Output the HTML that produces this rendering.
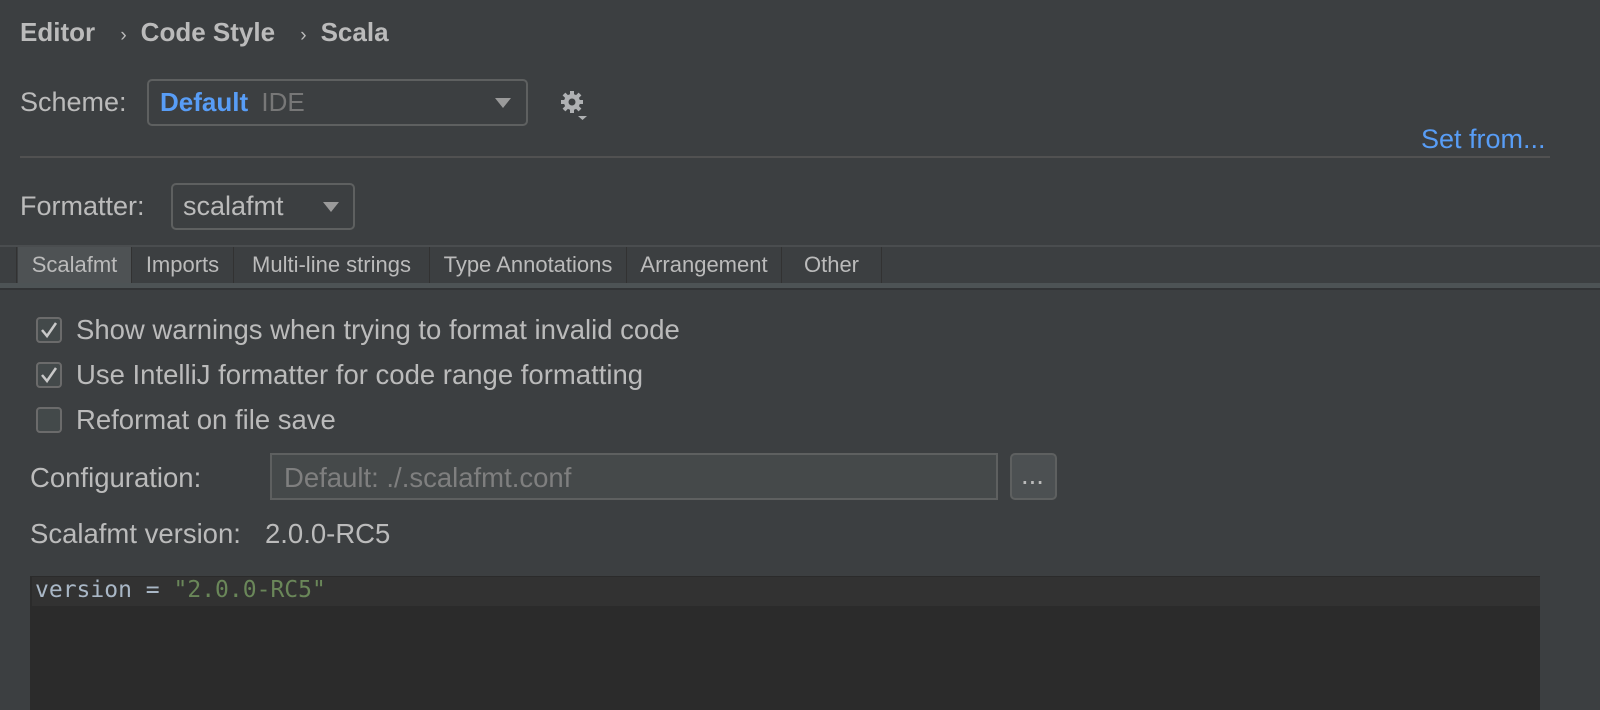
<!DOCTYPE html>
<html><head><meta charset="utf-8"><style>
*{margin:0;padding:0;box-sizing:border-box}
body{width:1600px;height:710px;overflow:hidden;background:#3c3f41;font-family:"Liberation Sans",sans-serif;color:#bbbbbb;position:relative;font-size:27.5px}
.a{position:absolute;white-space:nowrap}
.combo{position:absolute;border:2px solid #5e6060;border-radius:5px;background:#3c3f41}
.tri{position:absolute;width:0;height:0;border-left:8px solid transparent;border-right:8px solid transparent;border-top:10px solid #9a9a9a}
.cb{position:absolute;width:26px;height:26px;border:2px solid #6b6b6b;border-radius:4px;background:#43494a}
.tab{position:absolute;top:247px;height:36px;line-height:36px;font-size:22px;color:#bbbbbb;border-right:1px solid #323232;text-align:center}
</style></head><body>
<div class="a" style="left:20px;top:17px;font-weight:bold;font-size:26px;color:#bbbbbb">Editor <span style="font-weight:normal;font-size:19px;margin:0 14px 0 18px">›</span>Code Style <span style="font-weight:normal;font-size:19px;margin:0 14px 0 18px">›</span>Scala</div>

<div class="a" style="left:20px;top:87px;font-size:27px">Scheme:</div>
<div class="combo" style="left:147px;top:79px;width:381px;height:47px"></div>
<div class="a" style="left:160px;top:87px;font-weight:bold;color:#589df6;font-size:26px">Default <span style="font-weight:normal;color:#777;margin-left:6px">IDE</span></div>
<div class="tri" style="left:495px;top:98px"></div>
<svg class="a" style="left:558px;top:88px" width="34" height="34" viewBox="0 0 34 34"><g fill="#afb1b3"><circle cx="14" cy="14" r="8"/><g stroke="#afb1b3" stroke-width="4"><line x1="14" y1="3" x2="14" y2="25"/><line x1="3" y1="14" x2="25" y2="14"/><line x1="6" y1="6" x2="22" y2="22"/><line x1="22" y1="6" x2="6" y2="22"/></g></g><circle cx="14" cy="14" r="3.5" fill="#3c3f41"/><path d="M20 28h9l-4.5 4z" fill="#afb1b3"/></svg>

<div class="a" style="left:1421px;top:124px;color:#589df6;font-size:27px">Set from...</div>
<div class="a" style="left:20px;top:156px;width:1530px;height:2px;background:#515151"></div>

<div class="a" style="left:20px;top:191px;font-size:27px">Formatter:</div>
<div class="combo" style="left:171px;top:183px;width:184px;height:47px"></div>
<div class="a" style="left:183px;top:191px;font-size:27px">scalafmt</div>
<div class="tri" style="left:323px;top:202px"></div>

<div class="a" style="left:0;top:245px;width:1600px;height:2px;background:#4a4d4f"></div>
<div class="a" style="left:0;top:247px;width:17px;height:36px;background:#3c3f41;border-right:1px solid #323232"></div>
<div class="tab" style="left:18px;width:114px;background:#4e5254">Scalafmt</div>
<div class="tab" style="left:132px;width:102px">Imports</div>
<div class="tab" style="left:234px;width:196px">Multi-line strings</div>
<div class="tab" style="left:430px;width:197px">Type Annotations</div>
<div class="tab" style="left:627px;width:155px">Arrangement</div>
<div class="tab" style="left:782px;width:100px">Other</div>
<div class="a" style="left:0;top:283px;width:1600px;height:5px;background:#4d5355"></div>
<div class="a" style="left:0;top:288px;width:1600px;height:2px;background:#323436"></div>

<svg class="a" style="left:36px;top:317px" width="26" height="26"><rect x="1" y="1" width="24" height="24" rx="3" fill="#43494a" stroke="#6b6b6b" stroke-width="2"/><path d="M6 13l5 6 9-13" fill="none" stroke="#c8c8c8" stroke-width="2.5"/></svg>
<div class="a" style="left:76px;top:314px">Show warnings when trying to format invalid code</div>
<svg class="a" style="left:36px;top:362px" width="26" height="26"><rect x="1" y="1" width="24" height="24" rx="3" fill="#43494a" stroke="#6b6b6b" stroke-width="2"/><path d="M6 13l5 6 9-13" fill="none" stroke="#c8c8c8" stroke-width="2.5"/></svg>
<div class="a" style="left:76px;top:359px">Use IntelliJ formatter for code range formatting</div>
<div class="cb" style="left:36px;top:407px"></div>
<div class="a" style="left:76px;top:404px">Reformat on file save</div>

<div class="a" style="left:30px;top:462px">Configuration:</div>
<div class="a" style="left:270px;top:453px;width:728px;height:47px;border:2px solid #5e6060;background:#45494a"></div>
<div class="a" style="left:284px;top:462px;color:#7f7f7f">Default: ./.scalafmt.conf</div>
<div class="combo" style="left:1010px;top:453px;width:47px;height:47px;background:#4c5052"></div>
<div class="a" style="left:1021px;top:459px;color:#bbb">...</div>

<div class="a" style="left:30px;top:518px">Scalafmt version:</div>
<div class="a" style="left:265px;top:518px">2.0.0-RC5</div>

<div class="a" style="left:30px;top:576px;width:1510px;height:134px;background:#2b2b2b"></div>
<div class="a" style="left:32px;top:577px;width:1508px;height:29px;background:#323232"></div>
<div class="a" style="left:35px;top:577px;font-family:'DejaVu Sans Mono','Liberation Mono',monospace;font-size:23px;color:#a9b7c6">version<span style="color:#555"> </span>=<span style="color:#555"> </span><span style="color:#6a8759">"2.0.0-RC5"</span></div>
</body></html>
